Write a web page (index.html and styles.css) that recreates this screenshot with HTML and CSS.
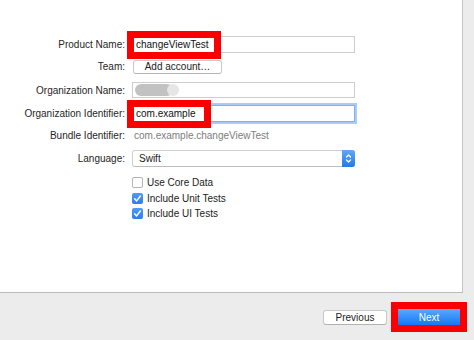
FILE: index.html
```html
<!DOCTYPE html>
<html>
  <head>
    <link rel="stylesheet" href="styles.css">
  </head>
  <body>
    <div class="panel">
      <div class="form">
        <div class="row">
          <div class="label">Product Name:</div>
          <div class="field">
            <span class="marked">changeViewTest</span>
          </div>
        </div>
        <div class="row row-team">
          <div class="label">Team:</div>
          <button class="btn add-btn">Add account…</button>
        </div>
        <div class="row row-org">
          <div class="label">Organization Name:</div>
          <div class="field field-org">
            <div class="blur"></div>
            <div class="blur-tail"></div>
          </div>
        </div>
        <div class="row row-id">
          <div class="label">Organization Identifier:</div>
          <div class="field focused">
            <span class="marked marked-short">com.example</span>
          </div>
        </div>
        <div class="row row-bundle">
          <div class="label">Bundle Identifier:</div>
          <div class="value">com.example.changeViewTest</div>
        </div>
        <div class="row row-lang">
          <div class="label">Language:</div>
          <div class="popup">
            <span class="popup-text">Swift</span>
            <span class="stepper">
              <svg width="13" height="17" viewBox="0 0 13 17">
                <path d="M4.5 7 L6.5 5 L8.5 7" fill="none" stroke="#fff" stroke-width="1.2" stroke-linecap="round" stroke-linejoin="round"/>
                <path d="M4.5 10 L6.5 12 L8.5 10" fill="none" stroke="#fff" stroke-width="1.2" stroke-linecap="round" stroke-linejoin="round"/>
              </svg>
            </span>
          </div>
        </div>
        <div class="row row-check1 check-row">
          <span class="check"></span>
          <span>Use Core Data</span>
        </div>
        <div class="row row-check2 check-row">
          <span class="check checked">
            <svg width="11" height="11" viewBox="0 0 11 11"><path d="M2.6 5.8 L4.6 7.9 L8.4 3" fill="none" stroke="#fff" stroke-width="1.5" stroke-linecap="round" stroke-linejoin="round"/></svg>
          </span>
          <span>Include Unit Tests</span>
        </div>
        <div class="row row-check3 check-row">
          <span class="check checked">
            <svg width="11" height="11" viewBox="0 0 11 11"><path d="M2.6 5.8 L4.6 7.9 L8.4 3" fill="none" stroke="#fff" stroke-width="1.5" stroke-linecap="round" stroke-linejoin="round"/></svg>
          </span>
          <span>Include UI Tests</span>
        </div>
      </div>
    </div>
    <div class="footer">
      <button class="btn prev-btn">Previous</button>
      <button class="btn next-btn">Next</button>
    </div>
  </body>
</html>
```

FILE: styles.css
```css
body {
  margin: 0;
  padding: 0;
  width: 474px;
  height: 340px;
  overflow: hidden;
  background-color: #ececec;
  font-family: "Liberation Sans", Arial, sans-serif;
  font-size: 10px;
  color: #222;
}
.panel {
  width: 462px;
  height: 292px;
  background: #fff;
  border-right: 1px solid #c4c4c4;
  border-bottom: 1px solid #bcbcbc;
}
.form {
  padding-top: 36px;
}
.row {
  display: flex;
  align-items: center;
  height: 17px;
}
.label {
  width: 125px;
  margin-right: 7px;
  text-align: right;
  flex-shrink: 0;
  color: #262626;
}
.row-team { margin-top: 4px; height: 19px; }
.row-org { margin-top: 6px; height: 16px; }
.row-id { margin-top: 6px; height: 19px; }
.row-bundle { margin-top: 5px; height: 14px; }
.row-lang { margin-top: 8px; }
.row-check1 { margin-top: 10px; height: 11px; }
.row-check2 { margin-top: 5px; height: 11px; }
.row-check3 { margin-top: 4px; height: 11px; }

.field {
  box-sizing: border-box;
  width: 223px;
  height: 17px;
  border: 1px solid #cdcdcd;
  display: flex;
  align-items: center;
  background: #fff;
}
.field-org {
  height: 16px;
}
.focused {
  border-color: #7fb0ee;
  box-shadow: 0 0 0 2px #a9cbf5;
}
.marked {
  position: relative;
  z-index: 1;
  margin-left: 1px;
  height: 14px;
  line-height: 14px;
  padding: 0 5px 0 2px;
  background: #fff;
  color: #111;
  outline: 7px solid #fb0000;
}
.marked-short {
  padding-right: 9px;
}
.blur {
  margin-left: 2px;
  width: 38px;
  height: 12px;
  border-radius: 6px;
  background: #c2c2c2;
  filter: blur(0.7px);
}
.blur-tail {
  margin-left: -6px;
  width: 12px;
  height: 12px;
  border-radius: 6px;
  background: #e6e6e6;
  filter: blur(0.7px);
}
.value {
  margin-left: 2px;
  color: #7d7d7d;
}
.btn {
  box-sizing: border-box;
  font-family: "Liberation Sans", Arial, sans-serif;
  font-size: 10px;
  padding: 0;
  border-radius: 3px;
  cursor: pointer;
}
.add-btn {
  margin-left: 1px;
  width: 89px;
  height: 14px;
  background: #fff;
  border: 1px solid #c9c9c9;
  border-bottom-color: #b5b5b5;
  color: #222;
  line-height: 12px;
}
.popup {
  box-sizing: border-box;
  width: 223px;
  height: 17px;
  border: 1px solid #cfcfcf;
  border-bottom-color: #bcbcbc;
  border-radius: 3px;
  display: flex;
  align-items: center;
  justify-content: space-between;
  background: #fff;
}
.popup-text {
  margin-left: 6px;
  color: #222;
}
.stepper {
  width: 13px;
  height: 17px;
  margin-right: -1px;
  border-radius: 0 3px 3px 0;
  background: linear-gradient(#62a7fa, #2278f0);
  display: flex;
}
.check-row span:last-child {
  margin-left: 4px;
}
.check {
  box-sizing: border-box;
  margin-left: 132px;
  width: 11px;
  height: 11px;
  border: 1px solid #b4b4b4;
  border-radius: 2px;
  background: #fff;
  display: flex;
}
.check.checked {
  border: none;
  background: linear-gradient(#4f9bfa, #2a7cf2);
}
.footer {
  display: flex;
  justify-content: flex-end;
  align-items: flex-start;
  padding: 16px 14px 0 0;
}
.prev-btn {
  margin-top: 1px;
  width: 64px;
  height: 15px;
  background: #fff;
  border: 1px solid #c8c8c8;
  border-bottom-color: #b2b2b2;
  color: #222;
}
.next-btn {
  margin-left: 11px;
  width: 62px;
  height: 16px;
  border: none;
  border-radius: 0;
  background: linear-gradient(#5aaafc, #1677f7);
  color: #fff;
  outline: 7px solid #fb0000;
}
```
